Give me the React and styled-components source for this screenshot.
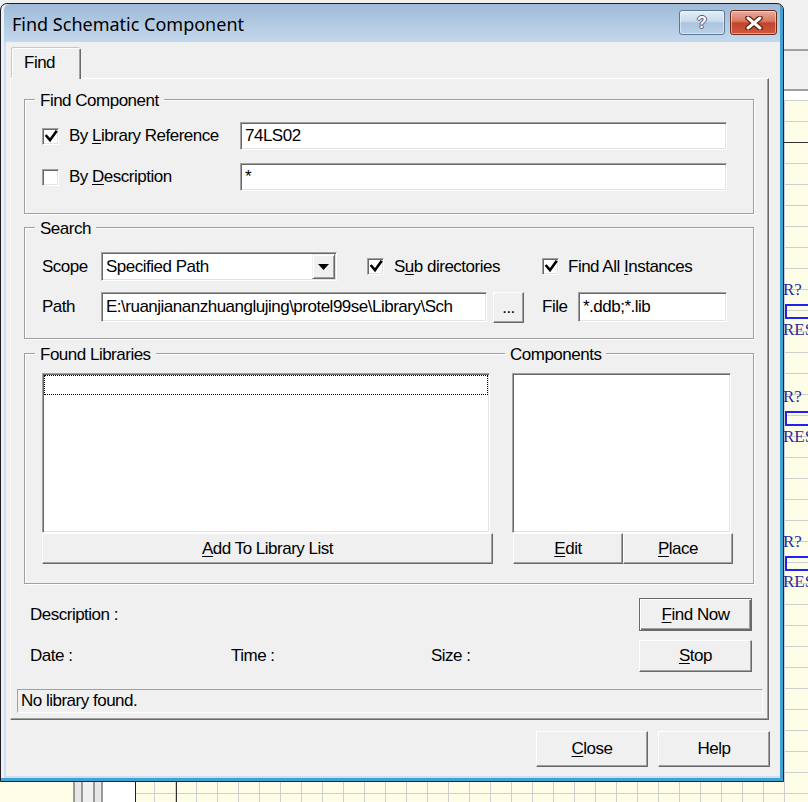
import React from "react";
import styled, { createGlobalStyle } from "styled-components";

const UI_FONT = `"Liberation Sans", Arial, sans-serif`;

const GlobalStyle = createGlobalStyle`
  html, body { margin: 0; padding: 0; background: #fdfde8; }
  body { font-family: ${UI_FONT}; }
  *, *::before, *::after { box-sizing: border-box; }
`;

const Desktop = styled.div`
  position: relative;
  width: 808px;
  height: 802px;
  overflow: hidden;
  padding-top: 3px;
  background-color: #fdfde8;
  background-image:
    linear-gradient(to bottom, #f0f0f0 0 49px, #a0a0a0 49px 51px, #f0f0f0 51px 89px, #a0a0a0 89px 91px, #ffffff 91px 100px),
    linear-gradient(to right, #fdfde8 0 73px, #9a9a9a 73px 75px, #e6e6e6 75px 81px, #9a9a9a 81px 83px, #f0f0f0 83px 93px, #9a9a9a 93px 95px, #e6e6e6 95px 101px, #9a9a9a 101px 103px, #ffffff 103px 135px, #202020 135px 136px),
    linear-gradient(#303030, #303030),
    linear-gradient(#303030, #303030),
    repeating-linear-gradient(to bottom, transparent 0 20px, #cfcfcf 20px 21px),
    repeating-linear-gradient(to right, transparent 0 20px, #cfcfcf 20px 21px);
  background-size: 100% 100px, 136px 100%, 100% 1px, 1px 100%, 100% 100%, 100% 100%;
  background-position: 0 0, 0 0, 0 142px, 176px 0, 0 -4px, -13px 0;
  background-repeat: no-repeat, no-repeat, no-repeat, no-repeat, repeat, repeat;
`;

const SchematicPart = styled.div`
  position: absolute;
  left: 783px;
  top: ${(p) => p.$top}px;
  display: flex;
  flex-direction: column;
  font-family: "Liberation Serif", "Times New Roman", serif;
  font-size: 17px;
  line-height: 17px;
  color: #2b2b9a;
  white-space: nowrap;
  z-index: 0;
`;

const PartBody = styled.div`
  width: 32px;
  height: 15px;
  margin: 6px 0 2px 2px;
  border: 2px solid #2222ee;
`;

const Window = styled.div`
  position: relative;
  z-index: 1;
  width: 784px;
  height: 779px;
  display: flex;
  flex-direction: column;
  border: 1px solid #1f1f1f;
  border-radius: 7px 7px 0 0;
  background: linear-gradient(to bottom, #9fbad7 0px, #c3d8ed 38px, #cddff1 39px, #cddff1 100%);
  box-shadow: inset -3px -3px 0 #3fa2d5, inset 3px 0 0 #e9f0f8;
`;

const TitleBar = styled.div`
  height: 38px;
  flex-shrink: 0;
  display: flex;
  align-items: flex-start;
  padding: 0 6px 0 11px;
`;

const TitleText = styled.div`
  flex: 1;
  font-family: "Noto Sans", "Liberation Sans", sans-serif;
  font-size: 18px;
  line-height: 38px;
  padding-top: 1px;
  color: #000;
`;

const CaptionButtons = styled.div`
  display: flex;
  gap: 5px;
  margin-top: 6px;
`;

const CaptionButton = styled.div`
  width: ${(p) => (p.$close ? 47 : 46)}px;
  height: 25px;
  border-radius: 3px;
  display: flex;
  align-items: center;
  justify-content: center;
  border: 1px solid ${(p) => (p.$close ? "#6e2a1d" : "#5d7897")};
  background: ${(p) =>
    p.$close
      ? "linear-gradient(to bottom, #e9ad9e 0%, #d9775f 45%, #c2432b 52%, #cf5a40 100%)"
      : "linear-gradient(to bottom, #e4eef8 0%, #c9daed 45%, #abc3de 52%, #bcd1e7 100%)"};
  box-shadow: inset 0 0 0 1px rgba(255, 255, 255, 0.45);
`;

const HelpGlyph = styled.span`
  font-family: "Liberation Sans", Arial, sans-serif;
  font-weight: bold;
  font-size: 16px;
  line-height: 16px;
  color: #ffffff;
  text-shadow: 1px 0 #4a5d75, -1px 0 #4a5d75, 0 1px #4a5d75, 0 -1px #4a5d75;
`;

const Client = styled.div`
  flex: 1;
  margin: 0 3px 5px 5px;
  background: #f0f0f0;
  display: flex;
  flex-direction: column;
  font-family: ${UI_FONT};
  font-size: 17px;
  letter-spacing: -0.5px;
  color: #000;
`;

const TabStrip = styled.div`
  height: 36px;
  flex-shrink: 0;
  display: flex;
  align-items: flex-end;
  padding-left: 6px;
`;

const Tab = styled.div`
  position: relative;
  z-index: 1;
  width: 69px;
  height: 31px;
  margin-bottom: -1px;
  padding-left: 11px;
  line-height: 28px;
  background: #f0f0f0;
  border-top: 1px solid #ffffff;
  border-left: 1px solid #ffffff;
  border-right: 1px solid #696969;
  box-shadow: inset -1px 0 0 #a0a0a0, -1px -1px 0 #c8c8c8;
  border-radius: 2px 2px 0 0;
`;

const Panel = styled.div`
  height: 642px;
  flex-shrink: 0;
  margin: 0 11px 0 4px;
  display: flex;
  flex-direction: column;
  padding-top: 20px;
  border-top: 1px solid #ffffff;
  border-left: 1px solid #ffffff;
  border-right: 1px solid #696969;
  border-bottom: 1px solid #696969;
  box-shadow: inset -1px -1px 0 #a0a0a0;
`;

const Group = styled.div`
  position: relative;
  flex-shrink: 0;
  height: ${(p) => p.$h}px;
  margin: ${(p) => p.$mt || 0}px 14px 0 13px;
  border: 1px solid #a0a0a0;
  box-shadow: inset 1px 1px 0 #ffffff, 1px 1px 0 #ffffff;
  padding: ${(p) => p.$pt}px 0 0 17px;
  display: flex;
  flex-direction: ${(p) => (p.$row ? "row" : "column")};
  gap: ${(p) => p.$gap}px;
`;

const Legend = styled.span`
  position: absolute;
  top: -10px;
  left: ${(p) => p.$left}px;
  padding: 0 5px;
  line-height: 22px;
  background: #f0f0f0;
  white-space: nowrap;
`;

const FormRow = styled.div`
  display: flex;
  align-items: ${(p) => (p.$top ? "flex-start" : "center")};
  height: ${(p) => p.$h}px;
`;

const CheckItem = styled.div`
  display: flex;
  align-items: center;
  gap: ${(p) => p.$gap || 10}px;
  width: ${(p) => p.$w}px;
  margin-left: ${(p) => p.$ml || 0}px;
  flex-shrink: 0;
  white-space: nowrap;
`;

const Box = styled.span`
  position: relative;
  width: 17px;
  height: 17px;
  flex-shrink: 0;
  background: #ffffff;
  border: 1px solid;
  border-color: #a0a0a0 #ffffff #ffffff #a0a0a0;
  box-shadow: inset 1px 1px 0 #696969, inset -1px -1px 0 #e3e3e3;
`;

const CheckMark = styled.svg`
  position: absolute;
  left: -1px;
  top: -1px;
`;

const FieldLabel = styled.span`
  width: ${(p) => p.$w}px;
  margin-left: ${(p) => p.$ml || 0}px;
  line-height: ${(p) => p.$lh || 20}px;
  flex-shrink: 0;
  white-space: nowrap;
`;

const Field = styled.div`
  width: ${(p) => p.$w}px;
  height: ${(p) => p.$h || 28}px;
  margin-left: ${(p) => p.$ml || 0}px;
  flex-shrink: 0;
  display: flex;
  align-items: center;
  padding: 0 4px;
  background: #ffffff;
  border: 1px solid;
  border-color: #a0a0a0 #ffffff #ffffff #a0a0a0;
  box-shadow: inset 1px 1px 0 #696969, inset -1px -1px 0 #e3e3e3;
  white-space: nowrap;
  overflow: hidden;
`;

const Combo = styled(Field)`
  padding: 1px 1px 1px 4px;
  align-items: stretch;
`;

const ComboText = styled.span`
  flex: 1;
  display: flex;
  align-items: center;
`;

const DropButton = styled.span`
  width: 23px;
  display: flex;
  align-items: center;
  justify-content: center;
  background: #f0f0f0;
  border: 1px solid;
  border-color: #f0f0f0 #696969 #696969 #f0f0f0;
  box-shadow: inset 1px 1px 0 #ffffff, inset -1px -1px 0 #a0a0a0;
`;

const Button = styled.button`
  width: ${(p) => p.$w}px;
  height: ${(p) => p.$h}px;
  margin-left: ${(p) => p.$ml || 0}px;
  flex-shrink: 0;
  padding: 0;
  display: flex;
  align-items: center;
  justify-content: center;
  font-family: inherit;
  font-size: inherit;
  letter-spacing: inherit;
  color: #000;
  background: #f0f0f0;
  border: 1px solid;
  border-color: ${(p) => (p.$default ? "#696969" : "#ffffff #696969 #696969 #ffffff")};
  box-shadow: ${(p) =>
    p.$default
      ? "inset 1px 1px 0 #ffffff, inset -1px -1px 0 #696969, inset -2px -2px 0 #a0a0a0"
      : "inset -1px -1px 0 #a0a0a0"};
  white-space: nowrap;
`;

const Column = styled.div`
  display: flex;
  flex-direction: column;
  width: ${(p) => p.$w}px;
`;

const ButtonPair = styled.div`
  display: flex;
  margin-left: 1px;
`;

const ListBox = styled.div`
  width: ${(p) => p.$w}px;
  height: 160px;
  padding: 1px;
  background: #ffffff;
  border: 1px solid;
  border-color: #a0a0a0 #ffffff #ffffff #a0a0a0;
  box-shadow: inset 1px 1px 0 #696969, inset -1px -1px 0 #e3e3e3;
`;

const FocusRow = styled.div`
  height: 20px;
  border: 1px dotted #000000;
`;

const InfoGrid = styled.div`
  margin: 14px 16px 0 19px;
  display: grid;
  grid-template-columns: 201px 200px 1fr 113px;
  grid-template-rows: 33px 32px;
  row-gap: 9px;
  align-items: center;
`;

const InfoLabel = styled.span`
  grid-column: ${(p) => p.$span || "auto"};
  white-space: nowrap;
`;

const StatusBar = styled.div`
  height: 24px;
  margin: 17px 5px 0 6px;
  padding-left: 3px;
  display: flex;
  align-items: center;
  border: 1px solid;
  border-color: #a0a0a0 #ffffff #ffffff #a0a0a0;
`;

const DialogButtons = styled.div`
  display: flex;
  justify-content: flex-end;
  gap: 10px;
  margin-top: 11px;
  padding-right: 10px;
`;

const U = styled.span`
  text-decoration: underline;
  text-underline-offset: 2px;
  text-decoration-thickness: 1px;
`;

const Check = ({ checked }) => (
  <Box>
    {checked && (
      <CheckMark width="17" height="17" viewBox="0 0 17 17">
        <path d="M4.5 8 L8 12.2 L14 3.8" fill="none" stroke="#000" strokeWidth="2.6" strokeLinecap="square" />
      </CheckMark>
    )}
  </Box>
);

const Part = ({ top }) => (
  <SchematicPart $top={top}>
    <span>R?</span>
    <PartBody />
    <span>RES</span>
  </SchematicPart>
);

export default function App() {
  return (
    <>
      <GlobalStyle />
      <Desktop>
        <Part top={281} />
        <Part top={388} />
        <Part top={533} />

        <Window>
          <TitleBar>
            <TitleText>Find Schematic Component</TitleText>
            <CaptionButtons>
              <CaptionButton>
                <HelpGlyph>?</HelpGlyph>
              </CaptionButton>
              <CaptionButton $close>
                <svg width="18" height="14" viewBox="0 0 18 14">
                  <path d="M3 2 L15 12 M15 2 L3 12" stroke="#5a1a10" strokeWidth="5.5" strokeLinecap="round" />
                  <path d="M3 2 L15 12 M15 2 L3 12" stroke="#ffffff" strokeWidth="3" strokeLinecap="round" />
                </svg>
              </CaptionButton>
            </CaptionButtons>
          </TitleBar>

          <Client>
            <TabStrip>
              <Tab>Find</Tab>
            </TabStrip>

            <Panel>
              <Group $h={115} $pt={22} $gap={13}>
                <Legend $left={10}>Find Component</Legend>
                <FormRow $h={28}>
                  <CheckItem $w={198}>
                    <Check checked />
                    <span>
                      By <U>L</U>ibrary Reference
                    </span>
                  </CheckItem>
                  <Field $w={487}>74LS02</Field>
                </FormRow>
                <FormRow $h={28}>
                  <CheckItem $w={198}>
                    <Check />
                    <span>
                      By <U>D</U>escription
                    </span>
                  </CheckItem>
                  <Field $w={487}>*</Field>
                </FormRow>
              </Group>

              <Group $h={112} $mt={13} $pt={24} $gap={11}>
                <Legend $left={10}>Search</Legend>
                <FormRow $h={29}>
                  <FieldLabel $w={59}>Scope</FieldLabel>
                  <Combo $w={236} $h={29}>
                    <ComboText>Specified Path</ComboText>
                    <DropButton>
                      <svg width="11" height="6" viewBox="0 0 11 6">
                        <polygon points="0,0 11,0 5.5,6" fill="#000" />
                      </svg>
                    </DropButton>
                  </Combo>
                  <CheckItem $w={175} $ml={30}>
                    <Check checked />
                    <span>
                      S<U>u</U>b directories
                    </span>
                  </CheckItem>
                  <CheckItem $w={180} $gap={9}>
                    <Check checked />
                    <span>
                      Find All <U>I</U>nstances
                    </span>
                  </CheckItem>
                </FormRow>
                <FormRow $h={31} $top>
                  <FieldLabel $w={59} $lh={30}>Path</FieldLabel>
                  <Field $w={386} $h={30}>
                    {"E:\\ruanjiananzhuanglujing\\protel99se\\Library\\Sch"}
                  </Field>
                  <Button $w={31} $h={31} $ml={6}>...</Button>
                  <FieldLabel $w={36} $ml={18} $lh={30}>File</FieldLabel>
                  <Field $w={149} $h={30}>*.ddb;*.lib</Field>
                </FormRow>
              </Group>

              <Group $h={231} $mt={14} $pt={19} $gap={19} $row>
                <Legend $left={10}>Found Libraries</Legend>
                <Legend $left={480}>Components</Legend>
                <Column $w={451}>
                  <ListBox $w={448}>
                    <FocusRow />
                  </ListBox>
                  <Button $w={451} $h={31}>
                    <span>
                      <U>A</U>dd To Library List
                    </span>
                  </Button>
                </Column>
                <Column $w={221}>
                  <ListBox $w={219} />
                  <ButtonPair>
                    <Button $w={110} $h={31}>
                      <span>
                        <U>E</U>dit
                      </span>
                    </Button>
                    <Button $w={110} $h={31}>
                      <span>
                        <U>P</U>lace
                      </span>
                    </Button>
                  </ButtonPair>
                </Column>
              </Group>

              <InfoGrid>
                <InfoLabel $span="1 / 4">Description :</InfoLabel>
                <Button $w={113} $h={33} $default>
                  <span>
                    <U>F</U>ind Now
                  </span>
                </Button>
                <InfoLabel>Date :</InfoLabel>
                <InfoLabel>Time :</InfoLabel>
                <InfoLabel>Size :</InfoLabel>
                <Button $w={113} $h={32}>
                  <span>
                    <U>S</U>top
                  </span>
                </Button>
              </InfoGrid>

              <StatusBar>No library found.</StatusBar>
            </Panel>

            <DialogButtons>
              <Button $w={112} $h={36}>
                <span>
                  <U>C</U>lose
                </span>
              </Button>
              <Button $w={112} $h={36}>Help</Button>
            </DialogButtons>
          </Client>
        </Window>
      </Desktop>
    </>
  );
}
